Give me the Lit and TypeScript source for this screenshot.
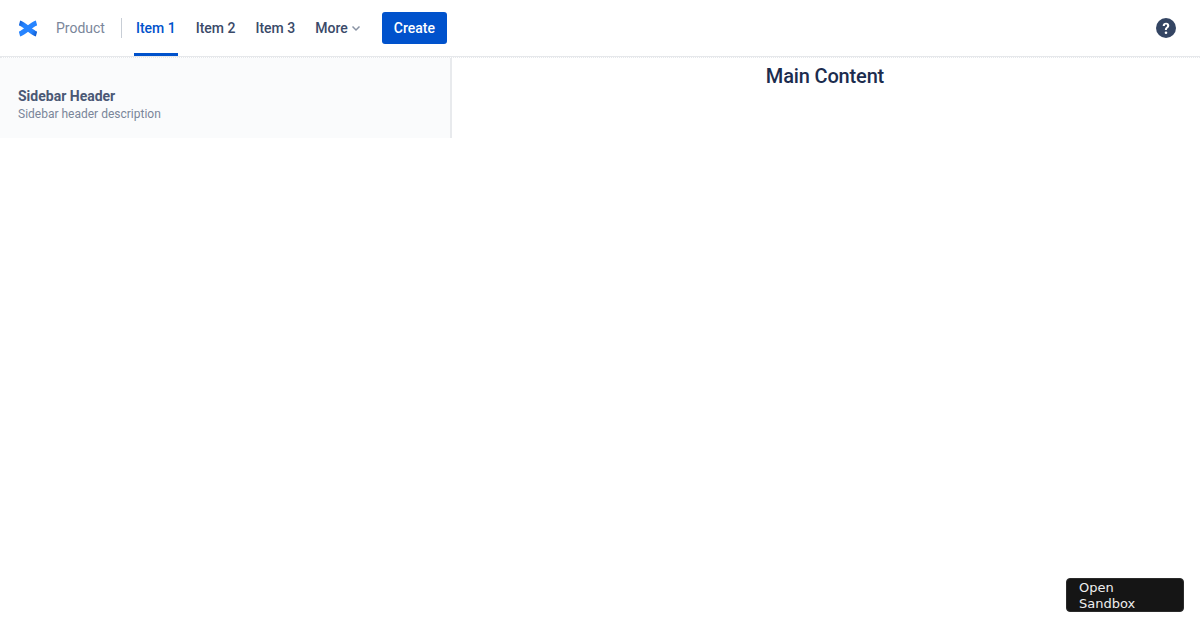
import { LitElement, html, css } from "lit";
import { customElement } from "lit/decorators.js";

@customElement("app-root")
export class AppRoot extends LitElement {
  static styles = css`
    :host { display: block; width: 100%; height: 630px; background: #fff; font-family: Roboto, "Liberation Sans", sans-serif; color: #172b4d; position: relative; overflow: hidden; }
    .nav { height: 56px; display: flex; align-items: stretch; padding: 0 12px; box-sizing: border-box; position: relative; background: #fff; }
    .nav-shadow { height: 2px; background: #e6e8eb; background-clip: padding-box; border-bottom: 1px dotted #e6e8eb; box-sizing: border-box; }
    .logo { display: flex; align-items: center; padding: 0 6px; gap: 8px; }
    .logo svg { display: block; margin: 0 1px; }
    .product { font-size: 14px; color: #7a869a; padding: 0 0 0 10px; line-height: 20px; }
    .sep { width: 1px; height: 20px; background: #c8ced6; align-self: center; margin: 0 12px 0 10px; }
    .items { display: flex; align-items: stretch; }
    .item { font-size: 14px; font-weight: 500; color: #3a4a69; display: flex; align-items: center; padding: 0 2px; margin-right: 16px; position: relative; gap: 2px; }
    .item.active { color: #0052cc; }
    .item.active::after { content: ""; position: absolute; left: 0; right: 0; bottom: 0; height: 3px; background: #0052cc; }
    .create { align-self: center; height: 32px; padding: 0 12px; background: #0052cc; color: #fff; font: 500 14px Roboto, sans-serif; border: 0; border-radius: 3px; margin-left: 2px; display: flex; align-items: center; }
    .spacer { flex: 1; }
    .help { display: flex; align-items: center; margin-right: 12px; }
    .layout { display: flex; align-items: flex-start; }
    .sidebar { width: 452px; box-sizing: border-box; height: 80px; background: #fafbfc; border-right: 2px solid #e8eaed; padding: 29px 18px 0; }
    .sb-title { font-size: 14px; font-weight: 700; color: #4a5875; line-height: 19px; }
    .sb-desc { font-size: 12px; color: #7a869a; line-height: 16px; }
    .main { flex: 1; text-align: center; padding-right: 2px; }
    .main h1 { margin: 0; font-size: 20px; font-weight: 500; line-height: 24px; padding-top: 6px; color: #1c2c4e; letter-spacing: -0.16px; }
    .sandbox { position: absolute; left: 1066px; top: 578px; width: 118px; height: 34px; box-sizing: border-box; background: #151515; color: #eee; border: 1px solid #2a2a2a; border-radius: 4px; font: 13px/16px "DejaVu Sans", sans-serif; padding: 1px 12px; }
  `;

  render() {
    return html`
      <div class="nav">
        <div class="logo">
          <svg width="18" height="17" viewBox="0 0 18 17">
            <defs>
              <linearGradient id="a" gradientUnits="userSpaceOnUse" x1="0.5" y1="3" x2="17.500" y2="14">
                <stop offset="0" stop-color="#1565dc"/><stop offset="0.25" stop-color="#2684ff"/><stop offset="0.75" stop-color="#2684ff"/><stop offset="1" stop-color="#0f5cd2"/>
              </linearGradient>
            </defs>
            <path d="M17.500 3C12 4.500 6 12.500 .5 14" fill="none" stroke="#2684ff" stroke-width="5"/>
            <path d="M.5 3C6 4.500 12 12.500 17.500 14" fill="none" stroke="url(#a)" stroke-width="5"/>
          </svg>
          <span class="product">Product</span>
        </div>
        <div class="sep"></div>
        <div class="items">
          <div class="item active">Item 1</div>
          <div class="item">Item 2</div>
          <div class="item">Item 3</div>
          <div class="item">More
            <svg width="12" height="12" viewBox="0 0 12 12"><path d="M2.500 4.500 6 8l3.500-3.500" fill="none" stroke="#8993a4" stroke-width="1.500"/></svg>
          </div>
        </div>
        <button class="create">Create</button>
        <div class="spacer"></div>
        <div class="help">
          <svg width="20" height="20" viewBox="0 0 20 20">
            <circle cx="10" cy="10" r="10" fill="#344563"/>
            <path d="M6.700 8c0-2.200 1.500-3.300 3.400-3.300s3.200 1.200 3.200 2.900c0 2.500-2.400 2.400-2.400 4.400H8.900c0-2.900 2.200-3 2.200-4.300 0-.7-.4-1.100-1.100-1.100S8.900 7.100 8.800 8z" fill="#fff"/>
            <circle cx="10" cy="14.800" r="1.300" fill="#fff"/>
          </svg>
        </div>
      </div>
      <div class="nav-shadow"></div>
      <div class="layout">
        <div class="sidebar">
          <div class="sb-title">Sidebar Header</div>
          <div class="sb-desc">Sidebar header description</div>
        </div>
        <div class="main"><h1>Main Content</h1></div>
      </div>
      <div class="sandbox">Open Sandbox</div>
    `;
  }
}
